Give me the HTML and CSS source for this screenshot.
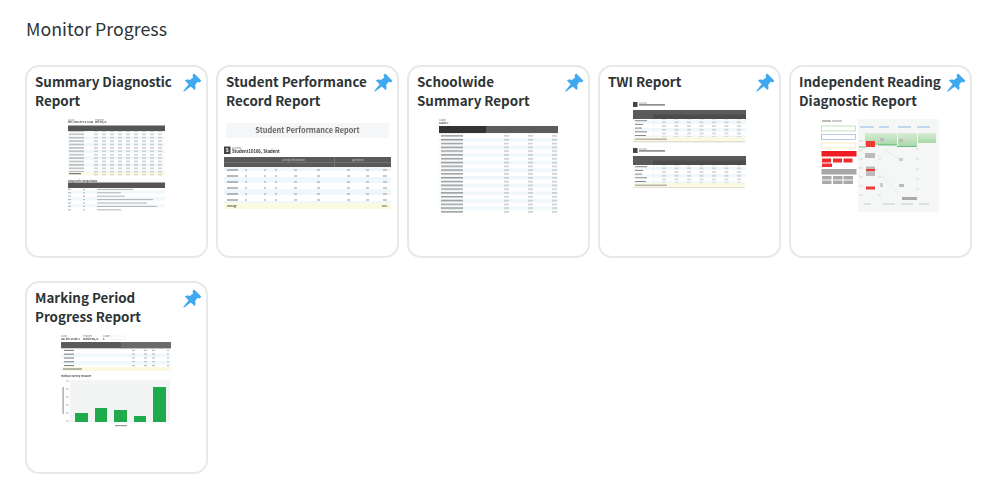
FILE: index.html
```html
<!DOCTYPE html>
<html lang="en">
<head>
    <meta charset="UTF-8">
    <meta name="viewport" content="width=device-width, initial-scale=1.0">
    <title>Monitor Progress</title>
    <link rel="stylesheet" href="styles.css">
</head>
<body>
    <!-- shared bits for the thumbnails and the pin -->
    <svg class="defs" width="0" height="0" aria-hidden="true">
        <defs>
            <symbol id="pin" viewBox="-7.5 -11 18.5 18.5">
                <path transform="rotate(45)" d="M-5 -9.8H5V-7.4L3 -6.4L3.6 -2.4C5.6 -1.4 6.6 -0.2 6.6 1.4H1.5L0.4 9.8H-0.4L-1.5 1.4H-6.6C-6.6 -0.2 -5.6 -1.4 -3.6 -2.4L-3 -6.4L-5 -7.4Z"/>
            </symbol>
            <pattern id="cells1" width="8" height="3.4" patternUnits="userSpaceOnUse">
                <rect x="2" y="1.2" width="4" height="1" fill="#b4b4b4"/>
            </pattern>
            <pattern id="rows1" width="97" height="6.8" patternUnits="userSpaceOnUse">
                <rect y="3.4" width="97" height="3.4" fill="#f1f8fc"/>
            </pattern>
            <pattern id="label1" width="97" height="3.4" patternUnits="userSpaceOnUse">
                <rect x="1" y="1.2" width="15" height="1" fill="#999"/>
            </pattern>
            <pattern id="rows2" width="167" height="12" patternUnits="userSpaceOnUse">
                <rect y="6" width="167" height="6" fill="#eef7fb"/>
            </pattern>
            <pattern id="rows3" width="119" height="7.6" patternUnits="userSpaceOnUse">
                <rect y="3.8" width="119" height="3.8" fill="#f0f8fc"/>
            </pattern>
            <pattern id="label3" width="119" height="3.8" patternUnits="userSpaceOnUse">
                <rect x="2" y="1.2" width="22" height="1.1" fill="#777"/>
            </pattern>
            <pattern id="value3" width="24" height="3.8" patternUnits="userSpaceOnUse">
                <rect x="17" y="1.3" width="5" height="1" fill="#b0b0b0"/>
            </pattern>
            <pattern id="rows4" width="113" height="7.4" patternUnits="userSpaceOnUse">
                <rect y="3.7" width="113" height="3.7" fill="#f1f8fc"/>
            </pattern>
            <pattern id="cells4" width="12.5" height="3.7" patternUnits="userSpaceOnUse">
                <rect x="4" y="1.4" width="4" height="0.9" fill="#b0b0b0"/>
            </pattern>
            <g id="twi-table">
                <rect width="4.5" height="5" fill="#444"/>
                <rect x="6" y="0.6" width="8" height="0.9" fill="#aaa"/>
                <rect x="6" y="2.2" width="26" height="1.4" fill="#777"/>
                <rect y="8" width="113" height="9" fill="#5a5a5a"/>
                <rect x="20" y="12.6" width="93" height="4.4" fill="#4c4c4c"/>
                <rect y="17" width="113" height="18" fill="url(#rows4)"/>
                <rect x="2" y="18.2" width="12" height="1" fill="#888"/>
                <rect x="2" y="21.9" width="8" height="1" fill="#888"/>
                <rect x="2" y="25.6" width="7" height="1" fill="#888"/>
                <rect x="2" y="29.3" width="12" height="1" fill="#888"/>
                <rect x="2" y="33" width="11" height="1" fill="#888"/>
                <rect x="20" y="17" width="93" height="18" fill="url(#cells4)"/>
                <rect y="35" width="112" height="5" fill="#fbf9e2"/>
                <rect x="2" y="36.6" width="32" height="1.2" fill="#a5a5a5"/>
                <rect y="39.6" width="112" height="0.6" fill="#bbb"/>
            </g>
            <linearGradient id="green" x1="0" y1="0" x2="0" y2="1">
                <stop offset="0" stop-color="#d8ecd6"/>
                <stop offset="1" stop-color="#a9d8a8"/>
            </linearGradient>
        </defs>
    </svg>

    <main class="page">
        <h1 class="page-title">Monitor Progress</h1>
        <div class="report-grid">

            <div class="report-card">
                <div class="card-head">
                    <h2>Summary Diagnostic Report</h2>
                    <svg class="pin"><use href="#pin"/></svg>
                </div>
                <svg class="thumb" width="97" height="94" viewBox="0 0 97 94">
                    <text class="tiny" x="0" y="2">Class</text>
                    <text class="tiny-b" x="0" y="4.4">Mrs. Mercer's 6 Class</text>
                    <text class="tiny" x="27" y="2">Teacher</text>
                    <text class="tiny-b" x="27" y="4.4">Mercer, K.</text>
                    <rect y="6.5" width="97" height="5.5" fill="#555"/>
                    <rect y="12" width="97" height="41" fill="url(#rows1)"/>
                    <rect y="12" width="22" height="41" fill="url(#label1)"/>
                    <rect x="25" y="12" width="72" height="41" fill="url(#cells1)"/>
                    <rect y="53" width="97" height="3.2" fill="#fbf9e2"/>
                    <rect x="1" y="54" width="12" height="1.2" fill="#777"/>
                    <rect x="25" y="53" width="72" height="3.4" fill="url(#cells1)"/>
                    <text class="tiny-b" x="0" y="62.6">Diagnostic comparisons</text>
                    <rect y="63.5" width="97" height="5.5" fill="#555"/>
                    <rect y="69" width="97" height="23" fill="url(#rows1)"/>
                    <path d="M0 70.4h3M15 70.4h2M29 70.4h36M0 73.8h3M15 73.8h2M29 73.8h24M0 77.2h3M15 77.2h2M29 77.2h28M0 80.6h3M15 80.6h2M29 80.6h56M0 84h3M15 84h2M29 84h50M0 87.4h3M15 87.4h2M29 87.4h60M0 90.8h3M15 90.8h2M29 90.8h24" stroke="#a8a8a8" stroke-width="0.9"/>
                </svg>
            </div>

            <div class="report-card">
                <div class="card-head">
                    <h2>Student Performance Record Report</h2>
                    <svg class="pin"><use href="#pin"/></svg>
                </div>
                <svg class="thumb thumb-low" width="167" height="88" viewBox="0 0 167 88">
                    <rect x="2" width="163" height="15" fill="#f5f6f8"/>
                    <text class="thumb-banner" x="83.5" y="10.2" text-anchor="middle">Student Performance Report</text>
                    <rect y="23.5" width="6.5" height="7.5" fill="#444"/>
                    <text class="thumb-initial" x="3.25" y="29" text-anchor="middle">S</text>
                    <text class="tiny" x="8" y="26">Student</text>
                    <text class="thumb-name" x="8" y="30.4">Student10166, Student</text>
                    <rect y="34" width="167" height="10" fill="#5a5a5a"/>
                    <rect x="110" y="34" width="0.6" height="10" fill="#888"/>
                    <rect y="39" width="167" height="0.5" fill="#888"/>
                    <text class="tiny-w" x="58" y="37.6">Activity Information</text>
                    <text class="tiny-w" x="128" y="37.6">Questions</text>
                    <rect y="44" width="167" height="36" fill="url(#rows2)"/>
                    <path d="M3 47h11M3 53h11M3 59h11M3 65h11M3 71h11M3 77h11" stroke="#777" stroke-width="1"/>
                    <path d="M21 47h2M40 47h2M51 47h2M70 47h3M93 47h3M123 47h3M142 47h3M159 47h4M21 53h2M40 53h2M51 53h2M70 53h3M93 53h3M123 53h3M142 53h3M159 53h4M21 59h2M40 59h2M51 59h2M70 59h3M93 59h3M123 59h3M142 59h3M159 59h4M21 65h2M40 65h2M51 65h2M70 65h3M93 65h3M123 65h3M142 65h3M159 65h4M21 71h2M40 71h2M51 71h2M70 71h3M93 71h3M123 71h3M142 71h3M159 71h4M21 77h2M40 77h2M51 77h2M70 77h3M93 77h3M123 77h3M142 77h3M159 77h4" stroke="#999" stroke-width="1"/>
                    <rect y="80" width="167" height="6" fill="#fbfadf"/>
                    <text class="tiny-b" x="3" y="84.2">Average</text>
                    <text class="tiny-b" x="158" y="84.2">68%</text>
                </svg>
            </div>

            <div class="report-card">
                <div class="card-head">
                    <h2>Schoolwide<br>Summary Report</h2>
                    <svg class="pin"><use href="#pin"/></svg>
                </div>
                <svg class="thumb" width="119" height="94" viewBox="0 0 119 94">
                    <text class="tiny" x="0" y="2">Grade</text>
                    <text class="tiny-b" x="0" y="4.6">Grade 7</text>
                    <rect y="7" width="119" height="7" fill="#5c5c5c"/>
                    <rect y="7" width="47" height="7" fill="#333"/>
                    <rect y="14" width="119" height="80" fill="url(#rows3)"/>
                    <rect y="14" width="119" height="80" fill="url(#label3)"/>
                    <rect x="48" y="14" width="24" height="80" fill="url(#value3)"/>
                    <rect x="71" y="14" width="24" height="80" fill="url(#value3)"/>
                    <rect x="95" y="14" width="24" height="80" fill="url(#value3)"/>
                </svg>
            </div>

            <div class="report-card">
                <div class="card-head">
                    <h2>TWI Report</h2>
                    <svg class="pin"><use href="#pin"/></svg>
                </div>
                <svg class="thumb" width="113" height="87" viewBox="0 -1 113 87">
                    <use href="#twi-table"/>
                    <use href="#twi-table" y="46"/>
                </svg>
            </div>

            <div class="report-card">
                <div class="card-head">
                    <h2>Independent Reading Diagnostic Report</h2>
                    <svg class="pin"><use href="#pin"/></svg>
                </div>
                <svg class="thumb" width="118" height="94" viewBox="0 0 118 94">
                    <rect x="37" width="81" height="93" fill="#f5f7f7"/>
                    <rect x="1" y="1.5" width="9" height="1" fill="#777"/>
                    <rect x="11" y="1.5" width="10" height="1" fill="#999"/>
                    <rect x="0.5" y="7" width="34" height="5" fill="#fff" stroke="#a9d6a5" stroke-width="0.7"/>
                    <rect x="0.5" y="15.5" width="34" height="5" fill="#fff" stroke="#9fb1d8" stroke-width="0.7"/>
                    <rect x="0.5" y="24" width="34" height="5" fill="#fff" stroke="#f5e59a" stroke-width="0.7"/>
                    <rect x="0.5" y="32" width="35" height="5.5" fill="#ef1c24"/>
                    <path d="M1 39.5h9v4H1zM12 39.5h9v4h-9zM22.5 39.5h9v4h-9zM1 44.5h10v3.5H1z" fill="#ef2c2f"/>
                    <rect x="0.5" y="50" width="35" height="5.5" fill="#a7a7a7"/>
                    <path d="M1 57h9.5v3.5H1zM12 57h9.5v3.5H12zM22.5 57h9.5v3.5h-9.5zM1 61.5h9.5v3.5H1zM12 61.5h9.5v3.5H12zM22.5 61.5h9.5v3.5h-9.5z" fill="#aaa"/>
                    <path d="M39 8h14M58 8h10M77 8h13M96 8h13" stroke="#8db7e4" stroke-width="1.2"/>
                    <rect x="44" y="14" width="13" height="12" fill="url(#green)"/>
                    <rect x="57" y="14" width="19" height="12" fill="url(#green)"/>
                    <rect x="77" y="14" width="19" height="13" fill="url(#green)"/>
                    <rect x="97" y="14" width="18" height="10" fill="url(#green)"/>
                    <path d="M38 28h7M57 26h19M76 27.5h20" stroke="#35a04a" stroke-width="0.7"/>
                    <rect x="45" y="22" width="9" height="6" fill="#ee3b36"/>
                    <rect x="44" y="34" width="10" height="5" fill="#bbb"/>
                    <rect x="45" y="47.5" width="9" height="9.5" fill="#bbb"/>
                    <rect x="45" y="50" width="9" height="2" fill="#ee3b36"/>
                    <rect x="45" y="67.5" width="9" height="3" fill="#ee3b36"/>
                    <rect x="81" y="78" width="15" height="3" fill="#aaa"/>
                    <rect x="59" y="19" width="4" height="3" fill="#bbb"/>
                    <rect x="78" y="20" width="4" height="3" fill="#bbb"/>
                    <rect x="78" y="39" width="4" height="3" fill="#ccc"/>
                    <rect x="59" y="64" width="3" height="4" fill="#ccc"/>
                    <rect x="78" y="65" width="5" height="3" fill="#bbb"/>
                    <path d="M54 50L78 75M62 30L78 40M54 35L60 38" stroke="#d5d5d5" stroke-width="0.4" fill="none"/>
                    <path d="M38 22h4M38 31h4M38 40h4M38 49h4M38 58h4M38 67h4M38 76h4M57 22h3M57 40h3M57 58h3M57 76h3M95 30h3M95 40h3M95 50h3M95 60h3M95 70h3" stroke="#c8c8c8" stroke-width="0.7"/>
                    <path d="M43 85h7M62 85h12M80 85h12M98 85h10" stroke="#bbb" stroke-width="0.8"/>
                </svg>
            </div>

            <div class="report-card">
                <div class="card-head">
                    <h2>Marking Period Progress Report</h2>
                    <svg class="pin"><use href="#pin"/></svg>
                </div>
                <svg class="thumb" width="110" height="94" viewBox="0 0 110 94">
                    <text class="tiny" x="0" y="2">Class</text>
                    <text class="tiny-b" x="0" y="4.6">ARI 6th Grade A</text>
                    <text class="tiny" x="22" y="2">Teacher</text>
                    <text class="tiny-b" x="22" y="4.6">Matthews, K.</text>
                    <text class="tiny" x="42" y="2">Grade</text>
                    <text class="tiny-b" x="42" y="4.6">6</text>
                    <rect x="50" y="1" width="14" height="3.5" fill="#fff" stroke="#ddd" stroke-width="0.4"/>
                    <rect y="7" width="110" height="6.5" fill="#5a5a5a"/>
                    <rect x="60" y="7" width="50" height="6.5" fill="#6a6a6a"/>
                    <rect y="13.5" width="110" height="18.5" fill="url(#rows4)"/>
                    <path d="M3 15.4h10M3 19.2h10M3 23h10M3 26.8h10M3 30.6h10" stroke="#777" stroke-width="1"/>
                    <path d="M71 15.4h3M83 15.4h3M91 15.4h3M106 15.4h2M71 19.2h3M83 19.2h3M91 19.2h3M106 19.2h2M71 23h3M83 23h3M91 23h3M106 23h2M71 26.8h3M83 26.8h3M91 26.8h3M106 26.8h2M71 30.6h3M83 30.6h3M91 30.6h3M106 30.6h2" stroke="#aaa" stroke-width="0.9"/>
                    <rect y="32" width="110" height="4" fill="#fbfadf"/>
                    <rect x="2" y="33.4" width="19" height="1.2" fill="#888"/>
                    <text class="tiny-b" x="0" y="42.4">Median Fluency Measure</text>
                    <rect x="9" y="45" width="100" height="42" fill="#f2f5f3"/>
                    <rect x="1.5" y="52" width="1.2" height="27" fill="#999"/>
                    <path d="M5 46h3M5 54h3M5 62h3M5 70h3M5 78h3M5 86h3" stroke="#aaa" stroke-width="0.8"/>
                    <g fill="#1faa4c">
                        <rect x="14" y="78" width="13" height="9"/>
                        <rect x="34" y="73" width="12" height="14"/>
                        <rect x="53" y="75" width="13" height="12"/>
                        <rect x="73" y="81" width="12" height="6"/>
                        <rect x="92" y="52" width="13" height="35"/>
                    </g>
                    <rect x="54" y="90" width="12" height="1.2" fill="#999"/>
                </svg>
            </div>

        </div>
    </main>
</body>
</html>
```

FILE: styles.css
```css
* {
    margin: 0;
    padding: 0;
    box-sizing: border-box;
}

body {
    background-color: white;
    color: #2d3436;
    font-family: "Noto Sans CJK SC", "Noto Sans", sans-serif;
}

.defs {
    display: block;
    height: 0;
}

.page {
    padding: 15px 23px 0 25px;
}

.page-title {
    font-size: 17.8px;
    font-weight: 400;
    line-height: 26px;
    padding-left: 1px;
    margin-bottom: 24px;
}

.report-grid {
    display: grid;
    grid-template-columns: repeat(5, 183px);
    grid-auto-rows: 193px;
    column-gap: 8px;
    row-gap: 23px;
}

.report-card {
    display: flex;
    flex-direction: column;
    align-items: center;
    border: 2px solid #e8e8e8;
    border-radius: 14px;
    padding: 5px 9px 0 8px;
    background-color: white;
}

.card-head {
    display: flex;
    align-self: stretch;
    justify-content: space-between;
    align-items: flex-start;
}

.card-head h2 {
    font-size: 13.4px;
    font-weight: 700;
    line-height: 19px;
    color: #2d3436;
}

.pin {
    flex: none;
    width: 19px;
    height: 19px;
    margin: 1px -5px 0 0;
    fill: #3fa9f0;
}

.thumb {
    display: block;
    flex: none;
    margin-top: 9px;
    filter: blur(0.35px);
}

.thumb-low {
    margin-top: 13px;
}

.tiny,
.tiny-b,
.tiny-w {
    font-size: 2.5px;
    fill: #777;
}

.tiny-b {
    font-weight: 700;
    fill: #444;
}

.tiny-w {
    fill: #ccc;
}

.thumb-banner {
    font-size: 7.4px;
    font-weight: 700;
    fill: #666;
}

.thumb-initial {
    font-size: 4.6px;
    font-weight: 700;
    fill: white;
}

.thumb-name {
    font-size: 4.2px;
    font-weight: 700;
    fill: #333;
}
```
